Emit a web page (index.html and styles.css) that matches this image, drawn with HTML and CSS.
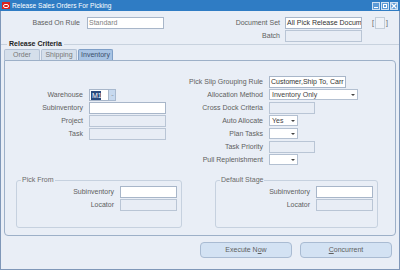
FILE: index.html
```html
<!DOCTYPE html>
<html>
<head>
<meta charset="utf-8">
<title>Release Sales Orders For Picking</title>
<link rel="stylesheet" href="styles.css">
</head>
<body>
<div class="window">
  <div class="titlebar">
    <span class="app-icon"><span class="app-icon-inner"></span></span>
    <span class="title">Release Sales Orders For Picking</span>
    <span class="wbtns">
      <span class="wbtn"><span class="g-min"></span></span>
      <span class="wbtn"><span class="g-max"></span></span>
      <span class="wbtn"><svg class="g-close" width="6" height="6" viewBox="0 0 6 6"><path d="M0.5 0.5 L5.5 5.5 M5.5 0.5 L0.5 5.5" stroke="#fff" stroke-width="1.2"/></svg></span>
    </span>
  </div>
  <div class="frame">
    <div class="header">
      <span class="hlbl l1">Based On Rule</span>
      <span class="field w77 muted">Standard</span>
      <span class="hlbl l2">Document Set</span>
      <span class="field w77">All Pick Release Docum</span>
      <span class="dff"><span class="br">[</span><span class="dff-box"></span><span class="br">]</span></span>
      <span class="hlbl l2 batch">Batch</span>
      <span class="field w77 disabled"></span>
    </div>

    <div class="section-title"><span class="line short"></span><span class="st-text">Release Criteria</span><span class="line"></span></div>

    <div class="tabs">
      <span class="tab">Order</span>
      <span class="tab">Shipping</span>
      <span class="tab active">Inventory</span>
    </div>

    <div class="panel">
      <div class="criteria">
        <div class="col-left">
          <div class="row"><span class="lbl">Warehouse</span>
            <span class="field w20 wh"><span class="sel">M1</span></span><span class="lov">&middot;&middot;</span></div>
          <div class="row"><span class="lbl">Subinventory</span><span class="field w77"></span></div>
          <div class="row"><span class="lbl">Project</span><span class="field w77 disabled"></span></div>
          <div class="row"><span class="lbl">Task</span><span class="field w77 disabled"></span></div>
        </div>
        <div class="col-right">
          <div class="row"><span class="lbl">Pick Slip Grouping Rule</span><span class="field w77">Customer,Ship To, Carr</span></div>
          <div class="row"><span class="lbl">Allocation Method</span><span class="combo w89"><span class="cval">Inventory Only</span><span class="arrow"></span></span></div>
          <div class="row"><span class="lbl">Cross Dock Criteria</span><span class="field w46 disabled"></span></div>
          <div class="row"><span class="lbl">Auto Allocate</span><span class="combo w29"><span class="cval">Yes</span><span class="arrow"></span></span></div>
          <div class="row"><span class="lbl">Plan Tasks</span><span class="combo w29"><span class="cval"></span><span class="arrow"></span></span></div>
          <div class="row"><span class="lbl">Task Priority</span><span class="field w46 disabled"></span></div>
          <div class="row"><span class="lbl">Pull Replenishment</span><span class="combo w29"><span class="cval"></span><span class="arrow"></span></span></div>
        </div>
      </div>

      <div class="groups">
        <fieldset class="group pick-from">
          <legend>Pick From</legend>
          <div class="grow"><span class="glbl">Subinventory</span><span class="field w57"></span></div>
          <div class="grow"><span class="glbl">Locator</span><span class="field w57 disabled"></span></div>
        </fieldset>
        <fieldset class="group default-stage">
          <legend>Default Stage</legend>
          <div class="grow"><span class="glbl">Subinventory</span><span class="field w57"></span></div>
          <div class="grow"><span class="glbl">Locator</span><span class="field w57 disabled"></span></div>
        </fieldset>
      </div>
    </div>

    <div class="actions">
      <span class="btn">Execute N<u>o</u>w</span>
      <span class="btn"><u>C</u>oncurrent</span>
    </div>
  </div>
</div>
</body>
</html>
```

FILE: styles.css
```css
* { box-sizing: border-box; }

body {
  margin: 0;
  font-family: "Liberation Sans", Arial, sans-serif;
  font-size: 7px;
  color: #5e5e5e;
  background: #e9eef6;
}

.window {
  width: 400px;
  height: 270px;
  display: flex;
  flex-direction: column;
  overflow: hidden;
}

/* Title bar */
.titlebar {
  flex: none;
  height: 11px;
  background: #2f7cc4;
  display: flex;
  align-items: center;
  padding: 0 2px 0 2px;
  gap: 2px;
}
.app-icon {
  width: 8px;
  height: 7px;
  background: #d9221f;
  display: flex;
  align-items: center;
  justify-content: center;
}
.app-icon-inner {
  width: 6px;
  height: 4px;
  border: 1px solid #fff;
  border-radius: 2px;
}
.title {
  flex: 1;
  color: #fff;
  font-size: 6.6px;
  line-height: 11px;
  white-space: nowrap;
}
.wbtns {
  display: flex;
  gap: 1px;
}
.wbtn {
  width: 8px;
  height: 8px;
  background: #5d9ad6;
  border: 1px solid #cfe0f2;
  display: flex;
  align-items: center;
  justify-content: center;
}
.g-min {
  width: 4px;
  height: 1px;
  background: #fff;
  margin-top: 3px;
}
.g-max {
  width: 4px;
  height: 4px;
  border: 1px solid #fff;
}

/* Frame */
.frame {
  flex: 1;
  border: 1px solid #7f97b8;
  border-top: none;
  background: #e9eef6;
  display: flex;
  flex-direction: column;
}

/* Header area */
.header {
  display: grid;
  grid-template-columns: 86px 77px 121px 77px auto;
  grid-auto-rows: 13px;
  padding-top: 6px;
  align-items: start;
}
.hlbl {
  text-align: right;
  line-height: 12px;
  white-space: nowrap;
}
.hlbl.l1 { padding-right: 7px; }
.hlbl.l2 { padding-right: 5px; }
.hlbl.batch { grid-column: 3; }

.field {
  height: 12px;
  background: #fff;
  border: 1px solid #a8b6c9;
  line-height: 10px;
  padding-left: 1px;
  color: #333;
  white-space: nowrap;
  overflow: hidden;
  display: block;
  flex: none;
}
.field.muted { color: #808080; }
.field.disabled {
  background: #e8edf5;
  border-color: #b9c5d5;
}
.w77 { width: 77px; }
.w57 { width: 57px; }
.w46 { width: 46px; }
.w20 { width: 20px; }

.dff {
  display: flex;
  align-items: center;
  padding-left: 10px;
  height: 12px;
  gap: 1px;
}
.br { color: #666; line-height: 12px; }
.dff-box {
  width: 10px;
  height: 12px;
  border: 1px solid #c3ceda;
  background: #eef2f8;
}

/* Section title */
.section-title {
  display: flex;
  align-items: center;
  height: 6px;
  margin-top: -2px;
  gap: 2px;
}
.section-title .line {
  flex: 1;
  height: 1px;
  background: #c8d2de;
}
.section-title .line.short { flex: none; width: 6px; }
.st-text {
  font-weight: bold;
  color: #222;
  line-height: 6px;
  white-space: nowrap;
}

/* Tabs */
.tabs {
  display: flex;
  padding-left: 3px;
  margin-top: 2px;
  gap: 1px;
  height: 11px;
}
.tab {
  width: 36px;
  height: 11px;
  background: #d5dfeb;
  border: 1px solid #b4c2d5;
  border-bottom: none;
  border-radius: 2px 2px 0 0;
  text-align: center;
  line-height: 10px;
  color: #777;
}
.tab.active {
  width: 35px;
  background: #a9c4e4;
  border-color: #7f9fc7;
  color: #3c4f6c;
}

/* Panel */
.panel {
  margin: 0 3px;
  height: 176px;
  border: 1px solid #9db0c8;
  border-radius: 0 4px 4px 4px;
  display: flex;
  flex-direction: column;
}
.criteria {
  display: flex;
  padding-top: 15px;
}
.col-left {
  width: 184px;
  padding-top: 13px;
}
.col-right { flex: 1; }
.row {
  display: flex;
  height: 13px;
  align-items: flex-start;
}
.lbl {
  text-align: right;
  line-height: 12px;
  padding-right: 6px;
  white-space: nowrap;
  flex: none;
}
.col-left .lbl { width: 84px; }
.col-right .lbl { width: 80px; }

.wh {
  padding: 1px 0 0 1px;
}
.sel {
  display: block;
  width: 10px;
  height: 9px;
  background: #2b4a7e;
  color: #fff;
  line-height: 9px;
  padding-left: 1px;
}
.lov {
  width: 7px;
  height: 12px;
  background: #c7d9ef;
  border: 1px solid #a8b9cf;
  border-left: none;
  color: #555;
  line-height: 10px;
  text-align: center;
  font-size: 6px;
  letter-spacing: -1px;
}

.combo {
  height: 11px;
  background: #fff;
  border: 1px solid #b3c0d1;
  display: flex;
  align-items: center;
  padding: 0 2px;
}
.combo .cval {
  flex: 1;
  color: #444;
  line-height: 9px;
  white-space: nowrap;
}
.combo .arrow {
  width: 0;
  height: 0;
  border-left: 2px solid transparent;
  border-right: 2px solid transparent;
  border-top: 2px solid #444;
}
.w89 { width: 89px; }
.w29 { width: 29px; }

/* Group boxes */
.groups {
  display: flex;
  padding-left: 11px;
  margin-top: 9px;
  gap: 33px;
}
.group {
  margin: 0;
  border: 1px solid #c6d1df;
  border-radius: 3px;
  padding: 2px 4px 15px 0;
  min-width: 0;
}
.pick-from { width: 166px; }
.default-stage { width: 163px; }
.group legend {
  margin-left: 4px;
  padding: 0 1px;
  line-height: 8px;
  color: #6a6a6a;
}
.grow {
  display: flex;
  justify-content: flex-end;
  height: 13px;
  gap: 6px;
}
.glbl {
  line-height: 12px;
  white-space: nowrap;
}

/* Buttons */
.actions {
  display: flex;
  justify-content: flex-end;
  gap: 8px;
  padding-right: 7px;
  margin-top: 6px;
}
.btn {
  width: 92px;
  height: 16px;
  background: #d3e2f3;
  border: 1px solid #a9bbd2;
  border-radius: 4px;
  text-align: center;
  line-height: 14px;
  color: #5e5e5e;
}
.btn u { text-decoration: underline; }
```
